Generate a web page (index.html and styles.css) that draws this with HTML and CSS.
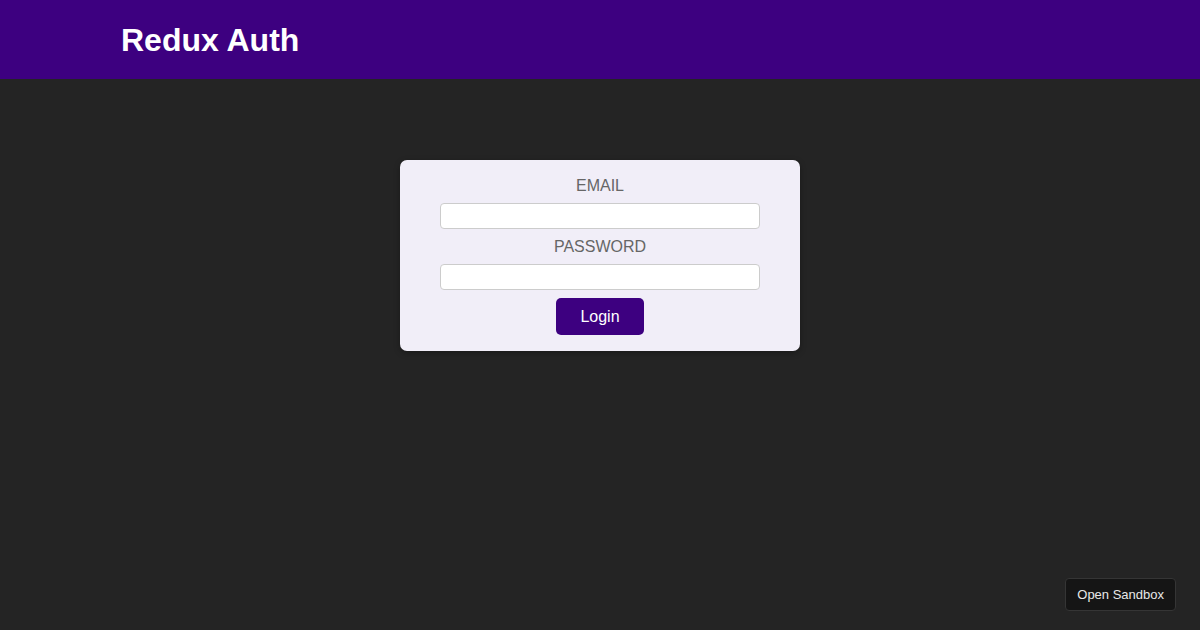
FILE: index.html
```html
<!DOCTYPE html>
<html>
<head>
<meta charset="UTF-8">
<title>Redux Auth</title>
<link rel="stylesheet" href="styles.css">
</head>
<body>
	<header class="barre">
		<h1 class="titre">Redux Auth</h1>
	</header>

	<main class="contenu">
		<form class="carte" action="#">
			<label class="etiquette" for="txtEmail">EMAIL</label>
			<input class="champ" type="email" id="txtEmail" name="txtEmail">
			<label class="etiquette etiquette-suivante" for="txtMdp">PASSWORD</label>
			<input class="champ" type="password" id="txtMdp" name="txtMdp">
			<button class="bouton" type="submit">Login</button>
		</form>
	</main>

	<a class="sandbox" href="#">Open Sandbox</a>
</body>
</html>
```
FILE: styles.css
```css
html{
	height:100%;
}

body{
	margin:0;
	height:100%;
	font:16px "Liberation Sans", Arial, Helvetica, sans-serif;
	background:#242424;
}

.barre{
	height:79px;
	box-sizing:border-box;
	padding:2px 0 0 121px;
	background:#3d0080;
	display:flex;
	align-items:center;
}

.titre{
	margin:0;
	font-size:32px;
	font-weight:bold;
	color:#fff;
}

.contenu{
	display:flex;
	justify-content:center;
	padding-top:81px;
}

.carte{
	width:320px;
	padding:17px 40px 16px;
	display:flex;
	flex-direction:column;
	align-items:center;
	background:#f1eef8;
	border-radius:7px;
	box-shadow:0 2px 6px rgba(0,0,0,0.3);
}

.etiquette{
	line-height:18px;
	color:#666;
	margin-bottom:8px;
}

.etiquette-suivante{
	margin-top:9px;
	margin-bottom:8px;
}

.champ{
	box-sizing:border-box;
	width:320px;
	height:26px;
	margin:0;
	border:1px solid #ccc;
	border-radius:4px;
	background:#fff;
}

.bouton{
	margin-top:8px;
	width:88px;
	height:37px;
	border:none;
	border-radius:5px;
	background:#3d0080;
	color:#fff;
	font:16px "Liberation Sans", Arial, sans-serif;
}

.sandbox{
	position:fixed;
	right:24px;
	bottom:19px;
	display:flex;
	align-items:center;
	box-sizing:border-box;
	height:33px;
	padding:0 11px;
	background:#151515;
	border:1px solid #353535;
	border-radius:4px;
	color:#e8e8e8;
	font:13px "Liberation Sans", Arial, sans-serif;
	text-decoration:none;
}
```
